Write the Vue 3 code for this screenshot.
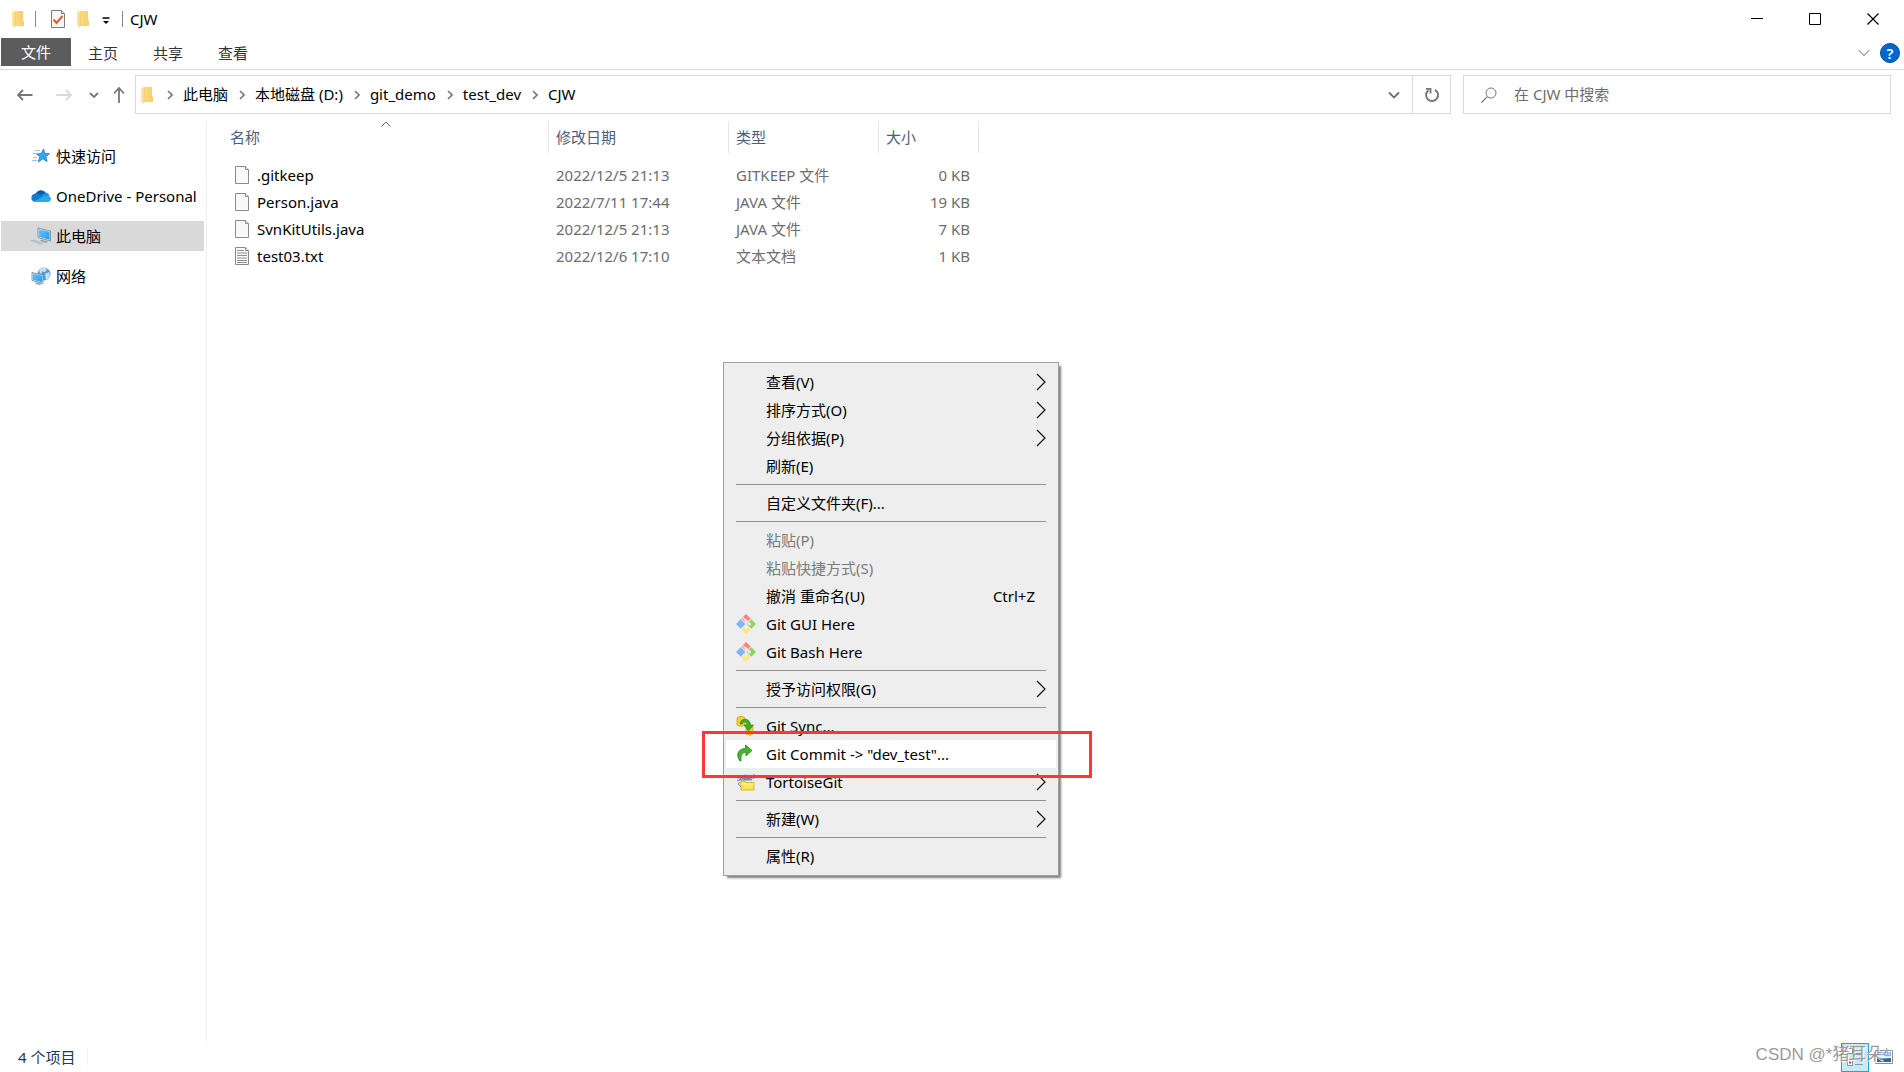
<template>
    <div class="explorer">
        <header class="title-bar">
            <svg class="folder" viewBox="0 0 12 18"><use href="#folder" /></svg>
            <span class="divider first"></span>
            <button class="quick doc" aria-label="属性">
                <svg width="14" height="18" viewBox="0 0 14 18">
                    <path d="M.5.5h10l3 3v14H.5z" fill="#f4f6f8" stroke="#7d7d7d" />
                    <path d="M10.5.5v3h3" fill="#ddd" stroke="#7d7d7d" />
                    <path d="M2.5 9.500l3 3.500 6-7" fill="none" stroke="#f0591e" stroke-width="2" />
                </svg>
            </button>
            <button class="quick" aria-label="新建文件夹">
                <svg class="folder" viewBox="0 0 12 18"><use href="#folder" /></svg>
            </button>
            <button class="quick more" aria-label="自定义快速访问工具栏">
                <svg width="8" height="8" viewBox="0 0 8 8">
                    <path d="M.5 1h7" stroke="#000" stroke-width="1.500" />
                    <path d="M1 4h6L4 7z" fill="#000" />
                </svg>
            </button>
            <span class="divider"></span>
            <h1>CJW</h1>
            <div class="window-buttons">
                <button aria-label="最小化">
                    <svg width="12" height="12" viewBox="0 0 12 12"><path d="M0 5.500h12" stroke="#000" /></svg>
                </button>
                <button aria-label="最大化">
                    <svg width="12" height="12" viewBox="0 0 12 12">
                        <path d="M.5.5h11v11H.5z" fill="none" stroke="#000" />
                    </svg>
                </button>
                <button aria-label="关闭">
                    <svg width="12" height="12" viewBox="0 0 12 12">
                        <path d="M.5.500l11 11M11.500.5l-11 11" stroke="#000" stroke-width="1.200" />
                    </svg>
                </button>
            </div>
        </header>

        <div class="ribbon">
            <button class="file-tab">文件</button>
            <nav>
                <button v-for="tab in tabs" :key="tab">{{ tab }}</button>
            </nav>
            <button class="collapse" aria-label="展开功能区">
                <svg width="12" height="8" viewBox="0 0 12 8">
                    <path d="M.5 1L6 6.500 11.500 1" fill="none" stroke="#a8a8a8" stroke-width="1.300" />
                </svg>
            </button>
            <button class="help" aria-label="帮助">?</button>
        </div>

        <div class="nav-row">
            <button class="arrow back" aria-label="后退">
                <svg width="16" height="12" viewBox="0 0 16 12">
                    <path d="M15.500 6H1M6 1L1 6l5 5" fill="none" stroke="#777" stroke-width="1.800" />
                </svg>
            </button>
            <button class="arrow forward" aria-label="前进">
                <svg width="16" height="12" viewBox="0 0 16 12">
                    <path d="M.5 6H15M10 1l5 5-5 5" fill="none" stroke="#dadada" stroke-width="1.800" />
                </svg>
            </button>
            <button class="arrow recent" aria-label="最近浏览的位置">
                <svg width="10" height="8" viewBox="0 0 10 8">
                    <path d="M1 2l4 4 4-4" fill="none" stroke="#777" stroke-width="1.800" />
                </svg>
            </button>
            <button class="arrow up" aria-label="上移">
                <svg width="12" height="16" viewBox="0 0 12 16">
                    <path d="M6 16V1M1 6.500L6 1l5 5.500" fill="none" stroke="#777" stroke-width="1.800" />
                </svg>
            </button>
            <div class="address">
                <svg class="folder" viewBox="0 0 12 18"><use href="#folder" /></svg>
                <template v-for="part in path" :key="part">
                    <svg class="crumb-arrow" width="6" height="10" viewBox="0 0 6 10">
                        <path d="M1 1l4 4-4 4" fill="none" stroke="#777" stroke-width="1.600" />
                    </svg>
                    <a href="#">{{ part }}</a>
                </template>
                <button class="history" aria-label="以前的位置">
                    <svg width="12" height="8" viewBox="0 0 12 8">
                        <path d="M1 1.500l5 5 5-5" fill="none" stroke="#6f6f6f" stroke-width="1.800" />
                    </svg>
                </button>
                <button class="refresh" aria-label="刷新">
                    <svg width="16" height="16" viewBox="0 0 16 16">
                        <path d="M11 2.800A6 6 0 1 1 4.500 3.200" fill="none" stroke="#777" stroke-width="1.900" />
                        <path d="M2 1.800h4.500v4.700" fill="none" stroke="#777" stroke-width="1.800" />
                    </svg>
                </button>
            </div>
            <label class="search">
                <svg width="16" height="16" viewBox="0 0 16 16">
                    <circle cx="10" cy="6" r="5" fill="none" stroke="#777" />
                    <path d="M6.400 9.600L.5 15.500" stroke="#777" stroke-width="1.200" />
                </svg>
                <input v-model="keyword" type="text" placeholder="在 CJW 中搜索" aria-label="在 CJW 中搜索">
            </label>
        </div>

        <div class="body">
            <aside>
                <a v-for="place in places" :key="place.name" href="#" :class="{ active: place.active }">
                    <svg width="20" height="20" viewBox="0 0 20 20"><use :href="'#' + place.icon" /></svg>
                    {{ place.name }}
                </a>
            </aside>
            <main>
                <table>
                    <colgroup>
                        <col class="col-name">
                        <col class="col-date">
                        <col class="col-type">
                        <col class="col-size">
                    </colgroup>
                    <thead>
                        <tr>
                            <th v-for="(column, index) in columns" :key="column">
                                <div class="head-cell">
                                    {{ column }}
                                    <svg v-if="index === 0" class="sort" width="10" height="6" viewBox="0 0 10 6">
                                        <path d="M.5 5.500L5 1l4.500 4.500" fill="none" stroke="#666" />
                                    </svg>
                                </div>
                            </th>
                        </tr>
                    </thead>
                    <tbody>
                        <tr v-for="file in files" :key="file.name">
                            <td>
                                <div class="file-name">
                                    <svg width="14" height="18" viewBox="0 0 14 18">
                                        <path d="M.5.5h10l3 3v14H.5z" fill="#f9f9f9" stroke="#8a8a8a" />
                                        <path d="M10.500.5v3h3" fill="#eee" stroke="#8a8a8a" />
                                        <path v-if="file.text" d="M2 3.500h7M2 6h10M2 8.500h10M2 11h10M2 13.500h10M2 15.500h10"
                                            stroke="#929292" />
                                    </svg>
                                    {{ file.name }}
                                </div>
                            </td>
                            <td>{{ file.date }}</td>
                            <td>{{ file.type }}</td>
                            <td class="size">{{ file.size }}</td>
                        </tr>
                    </tbody>
                </table>
            </main>
        </div>

        <footer>
            <span class="count">4 个项目</span>
            <div class="views">
                <span class="watermark">CSDN @*猪耳朵*</span>
                <button class="active" aria-label="详细信息">
                    <svg width="20" height="20" viewBox="0 0 20 20">
                        <path d="M2.500 1.500h5v5h-5zM2.500 12.500h5v6h-5z" fill="#fff" stroke="#8d8d8d" />
                        <path d="M10 3.500h8M10 6.500h8M10 13.500h8M10 17.500h8" stroke="#8a9aa5" />
                        <path d="M4 14.500h2v2H4z" fill="#c0392b" />
                    </svg>
                </button>
                <button aria-label="大缩略图">
                    <svg width="18" height="14" viewBox="0 0 18 14">
                        <path d="M.5.5h17v13H.5z" fill="#fff" stroke="#8d8d8d" />
                        <path d="M2 2h14v10H2z" fill="#79b7ea" />
                        <path d="M2 5c4-2 6 2 14 1v2H2z" fill="#e4f3fc" />
                        <path d="M2 7l5 2 9-1v4H2z" fill="#32706b" />
                        <path d="M2 11l7-1 7 1v1H2z" fill="#2b65b4" />
                    </svg>
                </button>
            </div>
        </footer>

        <div class="context-menu" role="menu">
            <template v-for="(group, index) in menu" :key="index">
                <hr v-if="index > 0">
                <button v-for="item in group" :key="item.label" role="menuitem" :disabled="item.disabled"
                    :class="{ hover: item.hover }">
                    <span class="menu-icon">
                        <svg v-if="item.icon" width="20" height="20" viewBox="0 0 20 20">
                            <use :href="'#' + item.icon" />
                        </svg>
                    </span>
                    <span class="label">{{ item.label }}</span>
                    <span v-if="item.shortcut" class="shortcut">{{ item.shortcut }}</span>
                    <svg v-if="item.sub" class="sub" width="10" height="18" viewBox="0 0 10 18">
                        <path d="M1 1l8 8-8 8" fill="none" stroke="#111" stroke-width="1.200" />
                    </svg>
                    <span v-if="item.hover" class="marker"></span>
                </button>
            </template>
        </div>

        <svg class="symbols" width="0" height="0">
            <defs>
                <linearGradient id="folder-fill" x1="0" x2="1">
                    <stop offset="0" stop-color="#fbdc83" />
                    <stop offset="1" stop-color="#f5cf68" />
                </linearGradient>
                <linearGradient id="screen-fill" x1="0" y1="0" x2="1" y2="1">
                    <stop offset="0" stop-color="#6cc5fb" />
                    <stop offset="1" stop-color="#219be8" />
                </linearGradient>
            </defs>
            <symbol id="folder" viewBox="0 0 12 18">
                <path d="M2 1h9v9l1 1v5H2z" fill="url(#folder-fill)" />
                <path d="M0 1l3 2v15l-3-2z" fill="#fde59c" />
                <path d="M3 3v14" stroke="#e8bd56" stroke-width=".6" />
            </symbol>
            <symbol id="star" viewBox="0 0 20 20">
                <path d="M12.500 3l1.400 4.600 4.600.1-3.700 3 1.300 4.800-4.300-2.700-4.500 3.200 1.600-5.200-3.400-2.900 4.700-.3z"
                    fill="#35a9ef" stroke="#1679bd" stroke-width=".8" />
                <path d="M4 4.500h5M2 7.500h3M2 11.500h4M1 14.500h5" stroke="#79b9e4" stroke-width=".8" />
            </symbol>
            <symbol id="cloud" viewBox="0 0 20 20">
                <path d="M4.500 8A6 6 0 0 1 15 6.800l-4 6.200z" fill="#0b5cab" />
                <path d="M4.500 16A4.200 4.200 0 0 1 4.700 7.500c2-.2 3.500.4 5 1.500l4 7z" fill="#127cd0" />
                <path d="M9.500 9.500L15 6.800c2 .2 3 1.500 3.200 3.200L14 12z" fill="#1594e2" />
                <path d="M3 15.500l8-4.500c2-1.200 4.500-1.500 7-1 3 1.500 2.200 6-1.200 6H4.500z" fill="#29a8ec" />
            </symbol>
            <symbol id="computer" viewBox="0 0 20 20">
                <path d="M7 2l12.500 3v10L7 11.500z" fill="#e6eef3" stroke="#6d8797" stroke-width=".8" />
                <path d="M8 3.200l10.600 2.600v8L8 10.800z" fill="url(#screen-fill)" />
                <path d="M10 13.500l7 2-2 1.500-6-2z" fill="#92a8b5" />
                <path d="M.5 14.500l3-.5 8 3.500-3 .5z" fill="#c3ccd1" stroke="#9ba7ae" stroke-width=".5" />
            </symbol>
            <symbol id="network" viewBox="0 0 20 20">
                <circle cx="13" cy="8" r="6.500" fill="#5a9fca" />
                <path d="M8 5c2-4 6-4 8-2l-2 3-3-.5-1 3zM14 8l4-2c2 3 0 7-3 8z" fill="#c5e1ed" />
                <path d="M1 6.500l11 2.500v8.500L1 14.500z" fill="#e3edf3" stroke="#688698" stroke-width=".8" />
                <path d="M1.800 7.600l9.400 2.200v6.500l-9.400-2.500z" fill="url(#screen-fill)" />
                <path d="M5 16l6 1.500-2 1.500-5-1z" fill="#9cabb5" />
            </symbol>
            <symbol id="git" viewBox="0 0 20 20">
                <path d="M10 0l4.600 4.600L10 9.200 5.400 4.600z" fill="#ff8080" />
                <path d="M4.700 5.300L9.400 10l-4.700 4.700L0 10z" fill="#80b3ff" />
                <path d="M15.300 5.300L20 10l-4.700 4.700L10.600 10z" fill="#8dd35f" />
                <path d="M10 10.800l4.600 4.600L10 20l-4.600-4.600z" fill="#ffe680" />
                <path d="M6.500 3.500L14 10.500M10 6.500V14" fill="none" stroke="#eee" stroke-width="1.300" />
                <circle cx="10" cy="6.800" r="1.500" fill="#eee" />
                <circle cx="13.500" cy="10" r="1.500" fill="#eee" />
                <circle cx="10" cy="13.500" r="1.500" fill="#eee" />
            </symbol>
            <symbol id="sync" viewBox="0 0 20 20">
                <path d="M1 2c2-2 6-2 8 0v7c-2 1.500-6 1.500-8 0z" fill="#f7d51d" stroke="#c6a21b" stroke-width=".8" />
                <path d="M10 11c2-1.500 5-1.500 7 0v7c-2 1.500-5 1.500-7 0z" fill="#f7d51d" stroke="#c6a21b"
                    stroke-width=".8" />
                <path d="M4 8c0-6 10-7 10.500 1h3l-5 6-4.500-6h3c-.5-4-4-4-4.500-1z" fill="#3fae2a" stroke="#287c21"
                    stroke-width=".6" />
            </symbol>
            <symbol id="commit" viewBox="0 0 20 20">
                <path d="M4 17C-1 10 3 4.500 9.500 4.500V1L16 6.500 10 12V8.500C6 8.500 4.500 11 5 17z" fill="#45b52c"
                    stroke="#2a8420" stroke-width=".8" />
            </symbol>
            <symbol id="tortoise" viewBox="0 0 20 20">
                <path d="M4 8c0-6 10-7 12 0z" fill="#a9c2e2" stroke="#58759f" stroke-width=".8" />
                <path d="M7 4l2 4M11 3v5M14 4l-2 4M5 6h10" stroke="#4e6c9b" stroke-width=".8" />
                <path d="M16 5c0-3 4-3 3.500 0l-2 2zM1 4l3 4-3 1M4 10l-2 2 3 3" fill="#d5e3ef" stroke="#698099"
                    stroke-width=".8" />
                <path d="M5 9h4l1 1.500h8V18H5z" fill="#ffe557" stroke="#c8a21d" stroke-width=".8" />
                <path d="M5 12h13" stroke="#fff3a0" />
            </symbol>
        </svg>
    </div>
</template>

<script setup>
import { ref } from 'vue';

const keyword = ref('');

const tabs = ['主页', '共享', '查看'];
const path = ['此电脑', '本地磁盘 (D:)', 'git_demo', 'test_dev', 'CJW'];
const columns = ['名称', '修改日期', '类型', '大小'];

const places = [
    { name: '快速访问', icon: 'star' },
    { name: 'OneDrive - Personal', icon: 'cloud' },
    { name: '此电脑', icon: 'computer', active: true },
    { name: '网络', icon: 'network' }
];

const files = [
    { name: '.gitkeep', date: '2022/12/5 21:13', type: 'GITKEEP 文件', size: '0 KB' },
    { name: 'Person.java', date: '2022/7/11 17:44', type: 'JAVA 文件', size: '19 KB' },
    { name: 'SvnKitUtils.java', date: '2022/12/5 21:13', type: 'JAVA 文件', size: '7 KB' },
    { name: 'test03.txt', date: '2022/12/6 17:10', type: '文本文档', size: '1 KB', text: true }
];

const menu = [
    [
        { label: '查看(V)', sub: true },
        { label: '排序方式(O)', sub: true },
        { label: '分组依据(P)', sub: true },
        { label: '刷新(E)' }
    ],
    [{ label: '自定义文件夹(F)...' }],
    [
        { label: '粘贴(P)', disabled: true },
        { label: '粘贴快捷方式(S)', disabled: true },
        { label: '撤消 重命名(U)', shortcut: 'Ctrl+Z' },
        { label: 'Git GUI Here', icon: 'git' },
        { label: 'Git Bash Here', icon: 'git' }
    ],
    [{ label: '授予访问权限(G)', sub: true }],
    [
        { label: 'Git Sync...', icon: 'sync' },
        { label: 'Git Commit -> "dev_test"...', icon: 'commit', hover: true },
        { label: 'TortoiseGit', icon: 'tortoise', sub: true }
    ],
    [{ label: '新建(W)', sub: true }],
    [{ label: '属性(R)' }]
];
</script>

<style>
body {
    margin: 0;
    background: #fff;
}
</style>

<style scoped>
.explorer {
    position: relative;
    display: flex;
    flex-direction: column;
    min-height: 100vh;
    font-family: "Noto Sans", "Noto Sans CJK SC", sans-serif;
    font-size: 15px;
    line-height: 20px;
    color: #000;
}

button {
    display: flex;
    align-items: center;
    justify-content: center;
    padding: 0;
    border: none;
    background: none;
    color: inherit;
    font: inherit;
}

a {
    color: inherit;
    text-decoration: none;
}

svg {
    flex: none;
    display: block;
}

.folder {
    width: 12px;
    height: 18px;
}

.title-bar {
    display: flex;
    align-items: center;
    height: 38px;
    padding-left: 12px;
}

.divider {
    width: 1px;
    height: 16px;
    background: #888;
}

.divider.first {
    margin: 0 15px 0 11px;
}

.quick.doc {
    margin-right: 12px;
}

.quick.more {
    margin: 4px 12px 0 13px;
}

h1 {
    margin: 0 0 0 7px;
    font-size: 15px;
    font-weight: 400;
}

.window-buttons {
    display: flex;
    margin-left: auto;
    padding-right: 2px;
}

.window-buttons button {
    width: 58px;
    height: 38px;
}

.ribbon {
    display: flex;
    height: 31px;
    padding: 0 4px 0 1px;
    border-bottom: 1px solid #dadbdc;
    color: #333;
}

.file-tab {
    width: 70px;
    height: 28px;
    background: #5c5c5c;
    color: #fff;
}

.ribbon nav {
    display: flex;
    gap: 35px;
    height: 30px;
    margin-left: 17px;
}

.collapse {
    height: 30px;
    margin: 0 10px 0 auto;
}

.help {
    width: 20px;
    height: 20px;
    margin-top: 5px;
    border: 1px solid #0a4c94;
    border-radius: 50%;
    background: #0067cf;
    color: #fff;
    font-weight: 600;
}

.nav-row {
    display: flex;
    padding: 5px 13px 7px 17px;
}

.arrow {
    height: 39px;
}

.forward {
    margin-left: 23px;
}

.recent {
    margin-left: 17px;
}

.up {
    margin: 0 10px 0 14px;
}

.address,
.search {
    display: flex;
    align-items: center;
    box-sizing: border-box;
    height: 39px;
    border: 1px solid #d9d9d9;
}

.address {
    flex: 1;
    padding-left: 5px;
}

.address a {
    padding-bottom: 1px;
}

.crumb-arrow {
    margin: 0 10px 0 11px;
}

.address .folder + .crumb-arrow {
    margin-left: 14px;
}

.history {
    width: 36px;
    height: 37px;
    margin-left: auto;
}

.refresh {
    width: 38px;
    height: 37px;
    border-left: 1px solid #d9d9d9;
}

.search {
    width: 428px;
    margin-left: 12px;
    padding-left: 17px;
}

.search input {
    flex: 1;
    min-width: 0;
    margin-left: 17px;
    padding: 0 0 1px;
    border: none;
    outline: none;
    background: none;
    color: #000;
    font: inherit;
}

.search input::placeholder {
    color: #6d6d6d;
    opacity: 1;
}

.body {
    display: flex;
    flex: 1;
}

aside {
    display: flex;
    flex-direction: column;
    gap: 10px;
    width: 203px;
    padding: 20px 2px 0 1px;
    border-right: 1px solid #f0f0f0;
}

aside a {
    display: flex;
    align-items: center;
    gap: 5px;
    height: 30px;
    padding-left: 30px;
    white-space: nowrap;
}

aside a.active {
    background: #d9d9d9;
}

table {
    width: 772px;
    table-layout: fixed;
    border-collapse: collapse;
}

.col-name {
    width: 342px;
}

.col-date {
    width: 180px;
}

.col-type {
    width: 150px;
}

.col-size {
    width: 100px;
}

th {
    padding: 0 0 8px;
    color: #4c607a;
    font-weight: 400;
}

.head-cell {
    position: relative;
    display: flex;
    align-items: center;
    height: 32px;
    padding-left: 7px;
    border-right: 1px solid #e5e5e5;
}

th:first-child .head-cell {
    padding-left: 23px;
}

.sort {
    position: absolute;
    top: 0;
    left: 174px;
}

td {
    height: 27px;
    padding: 0 0 0 7px;
    color: #6d6d6d;
}

td.size {
    padding-right: 9px;
    text-align: right;
}

.file-name {
    display: flex;
    align-items: center;
    gap: 8px;
    padding-left: 21px;
    color: #000;
}

footer {
    display: flex;
    align-items: center;
    justify-content: space-between;
    height: 30px;
    padding: 0 11px 0 18px;
}

.count {
    padding-right: 12px;
    border-right: 1px solid #f0f0f0;
    color: #1e395b;
    line-height: 16px;
}

.views {
    position: relative;
    display: flex;
    gap: 6px;
}

.views button.active {
    width: 28px;
    height: 29px;
    border: 1px solid #26a0da;
    background: #cbe8f6;
}

.watermark {
    position: absolute;
    right: 3px;
    top: 2px;
    z-index: 1;
    color: #9b9b9b;
    font-family: "Liberation Sans", "Noto Sans CJK SC", sans-serif;
    font-size: 17px;
    white-space: nowrap;
    text-shadow: 1px 1px 0 #fff;
    pointer-events: none;
}

.context-menu {
    position: absolute;
    top: 362px;
    left: 723px;
    box-sizing: border-box;
    width: 336px;
    padding: 5px 2px;
    border: 1px solid #a0a0a0;
    background: #eee;
    box-shadow: 3px 3px 2px -1px rgba(0, 0, 0, 0.5);
}

.context-menu button {
    position: relative;
    justify-content: flex-start;
    width: 100%;
    height: 28px;
    padding: 0 10px;
}

.context-menu button.hover {
    background: #fff;
}

.context-menu button:disabled {
    color: #7b7b7b;
}

.menu-icon {
    width: 20px;
    margin-right: 10px;
}

.sub {
    margin-left: auto;
}

.shortcut {
    margin: 0 11px 0 auto;
}

hr {
    height: 1px;
    margin: 4px 10px;
    border: none;
    background: #919191;
}

/* red frame around the highlighted command */
.marker {
    position: absolute;
    inset: -9px -36px -10px -24px;
    z-index: 1;
    border: 3px solid #ff3636;
    pointer-events: none;
}

.symbols {
    position: absolute;
}
</style>
